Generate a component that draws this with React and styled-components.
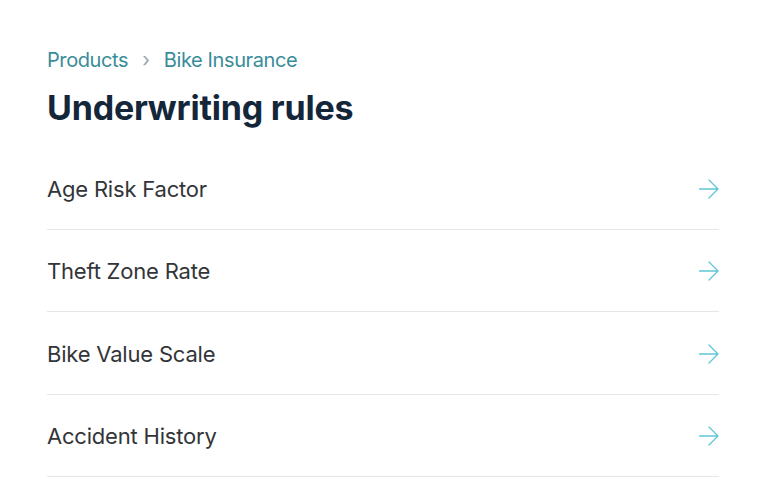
import styled, { createGlobalStyle } from "styled-components";

const GlobalStyle = createGlobalStyle`
  body {
    margin: 0;
    background: #fff;
    font-family: Inter, "Noto Sans", sans-serif;
  }
`;

const rules = [
  "Age Risk Factor",
  "Theft Zone Rate",
  "Bike Value Scale",
  "Accident History",
];

const Arrow = () => (
  <svg width="20" height="20" viewBox="0 0 20 20" fill="none">
    <path
      d="M0.5 10H19M10 1l9 9-9 9"
      stroke="#5fc6d6"
      strokeWidth="1.3"
      strokeLinecap="round"
      strokeLinejoin="round"
    />
  </svg>
);

export default function App() {
  return (
    <>
      <GlobalStyle />
      <Page>
        <Breadcrumb>
          <Crumb href="#">Products</Crumb>
          <Sep>›</Sep>
          <Crumb href="#">Bike Insurance</Crumb>
        </Breadcrumb>
        <Title>Underwriting rules</Title>
        <List>
          {rules.map((rule) => (
            <Row key={rule}>
              <RowLabel>{rule}</RowLabel>
              <Arrow />
            </Row>
          ))}
        </List>
      </Page>
    </>
  );
}

const Page = styled.div`
  width: 672px;
  padding: 46px 45px 0 47px;
`;

const Breadcrumb = styled.nav`
  display: flex;
  align-items: center;
  gap: 12px;
  height: 28px;
`;

const Crumb = styled.a`
  font-size: 20px;
  color: #3a8c9a;
  text-decoration: none;
  letter-spacing: -0.4px;
`;

const Sep = styled.span`
  font-size: 20px;
  color: #9aa5ad;
  margin: 0 2px;
`;

const Title = styled.h1`
  margin: 14px 0 0;
  font-size: 34px;
  line-height: 40px;
  font-weight: 700;
  color: #13263a;
  letter-spacing: -0.2px;
`;

const List = styled.ul`
  list-style: none;
  margin: 19px 0 0;
  padding: 0;
`;

const Row = styled.li`
  display: flex;
  align-items: center;
  justify-content: space-between;
  box-sizing: border-box;
  height: 82.5px;
  padding-top: 2px;
  border-bottom: 1px solid #e5e6e7;
  cursor: pointer;
`;

const RowLabel = styled.span`
  font-size: 22px;
  color: #333538;
  letter-spacing: -0.2px;
`;
